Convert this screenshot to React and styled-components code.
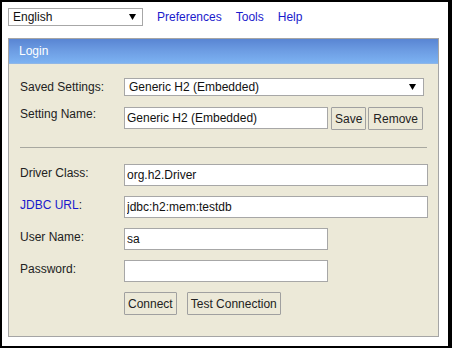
import React from 'react';
import styled, { createGlobalStyle } from 'styled-components';

const GlobalStyle = createGlobalStyle`
  html, body {
    margin: 0;
    padding: 0;
    background: #000;
  }
  body {
    font-family: "Liberation Sans", Arial, sans-serif;
    font-size: 12px;
    color: #111;
  }
`;

const Frame = styled.div`
  margin: 2px 4px 2px 2px;
  height: 344px;
  box-sizing: border-box;
  background: #fff;
  padding: 6px 0 0 6px;
`;

const TopBar = styled.div`
  display: flex;
  align-items: center;
  gap: 14px;
  height: 18px;
`;

const NavLink = styled.a`
  color: #1a1acc;
  text-decoration: none;
  cursor: pointer;
  line-height: 14px;
`;

const SelectBox = styled.div`
  display: flex;
  align-items: center;
  justify-content: space-between;
  box-sizing: border-box;
  width: ${p => p.$width}px;
  height: 18px;
  padding: 0 ${p => p.$arrowPad || 6}px 0 4px;
  background: #fff;
  border: 1px solid #a7a7a7;
  line-height: 14px;
`;

const Arrow = () => (
  <svg width="7" height="6" viewBox="0 0 7 6">
    <polygon points="0,0 7,0 3.5,6" fill="#000" />
  </svg>
);

const Panel = styled.div`
  margin-top: 12px;
  width: 431px;
  height: 299px;
  box-sizing: border-box;
  border: 1px solid #a5a5a5;
  background: #ece9d8;
`;

const PanelHeader = styled.div`
  height: 24px;
  line-height: 24px;
  padding-left: 10px;
  color: #fff;
  background: linear-gradient(to bottom, #5985d3 0%, #6d9de3 50%, #7cb2f2 100%);
  border-bottom: 1px solid #8fb6e6;
`;

const PanelBody = styled.div`
  padding: 14px 0 0 11px;
`;

const Row = styled.div`
  display: flex;
  align-items: ${p => (p.$center ? 'center' : 'flex-start')};
  margin-top: ${p => p.$top || 0}px;
`;

const Label = styled.div`
  width: 104px;
  flex: none;
  line-height: 14px;
  padding-top: ${p => p.$pad || 0}px;
  color: #222;
`;

const LabelLink = styled.span`
  color: #1a1acc;
`;

const TextInput = styled.input`
  box-sizing: border-box;
  width: ${p => p.$width}px;
  height: 22px;
  margin: 0;
  padding: 0 2px;
  border: 1px solid #a7a7a7;
  background: #fff;
  font-family: "Liberation Sans", Arial, sans-serif;
  font-size: 12px;
  color: #111;
  outline: none;
`;

const Button = styled.button`
  box-sizing: border-box;
  height: 23px;
  margin: 0 0 0 ${p => p.$gap || 0}px;
  padding: 0 ${p => p.$padX || 3}px;
  background: #ece9d8;
  border: 1px solid #a0a0a0;
  border-radius: 1px;
  font-family: "Liberation Sans", Arial, sans-serif;
  font-size: 12px;
  color: #222;
`;

const Divider = styled.div`
  width: 407px;
  height: 1px;
  background: #a8a8a0;
  margin: 17px 0 16px;
`;

const App = () => {
  return (
    <>
      <GlobalStyle />
      <Frame>
        <TopBar>
          <SelectBox $width={135}>
            <span>English</span>
            <Arrow />
          </SelectBox>
          <NavLink>Preferences</NavLink>
          <NavLink>Tools</NavLink>
          <NavLink>Help</NavLink>
        </TopBar>

        <Panel>
          <PanelHeader>Login</PanelHeader>
          <PanelBody>
            <Row $center>
              <Label>Saved Settings:</Label>
              <SelectBox $width={300} $arrowPad={7}>
                <span>Generic H2 (Embedded)</span>
                <Arrow />
              </SelectBox>
            </Row>
            <Row $top={11}>
              <Label $pad={0}>Setting Name:</Label>
              <TextInput $width={204} defaultValue="Generic H2 (Embedded)" readOnly />
              <Button $gap={3}>Save</Button>
              <Button $gap={2} $padX={4}>Remove</Button>
            </Row>

            <Divider />

            <Row>
              <Label $pad={2}>Driver Class:</Label>
              <TextInput $width={304} defaultValue="org.h2.Driver" readOnly />
            </Row>
            <Row $top={10}>
              <Label $pad={2}>
                <LabelLink>JDBC URL</LabelLink>:
              </Label>
              <TextInput $width={304} defaultValue="jdbc:h2:mem:testdb" readOnly />
            </Row>
            <Row $top={10}>
              <Label $pad={2}>User Name:</Label>
              <TextInput $width={204} defaultValue="sa" readOnly />
            </Row>
            <Row $top={10}>
              <Label $pad={2}>Password:</Label>
              <TextInput $width={204} type="password" defaultValue="" readOnly />
            </Row>
            <Row $top={10}>
              <Label />
              <Button>Connect</Button>
              <Button $gap={10}>Test Connection</Button>
            </Row>
          </PanelBody>
        </Panel>
      </Frame>
    </>
  );
};

export default App;
